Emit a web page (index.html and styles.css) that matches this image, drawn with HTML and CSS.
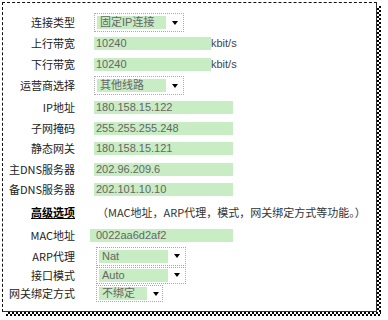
FILE: index.html
```html
<!DOCTYPE html>
<html>
<head>
<meta charset="utf-8">
<link rel="stylesheet" href="styles.css">
</head>
<body>
<div class="shell">
  <div class="box">
    <div class="form">
      <div class="lbl">连接类型</div>
      <div class="cell"><div class="sel"><span class="sv">固定IP连接</span><span class="arr"></span></div></div>

      <div class="lbl">上行带宽</div>
      <div class="cell"><span class="inp short">10240</span><span class="unit">kbit/s</span></div>

      <div class="lbl">下行带宽</div>
      <div class="cell"><span class="inp short">10240</span><span class="unit">kbit/s</span></div>

      <div class="lbl">运营商选择</div>
      <div class="cell"><div class="sel"><span class="sv">其他线路</span><span class="arr"></span></div></div>

      <div class="lbl">IP地址</div>
      <div class="cell"><span class="inp">180.158.15.122</span></div>

      <div class="lbl">子网掩码</div>
      <div class="cell"><span class="inp">255.255.255.248</span></div>

      <div class="lbl">静态网关</div>
      <div class="cell"><span class="inp">180.158.15.121</span></div>

      <div class="lbl">主DNS服务器</div>
      <div class="cell"><span class="inp">202.96.209.6</span></div>

      <div class="lbl">备DNS服务器</div>
      <div class="cell"><span class="inp">202.101.10.10</span></div>

      <div class="lbl adv">高级选项</div>
      <div class="cell desc">（MAC地址，ARP代理，模式，网关绑定方式等功能。）</div>

      <div class="lbl">MAC地址</div>
      <div class="cell"><span class="inp mac">0022aa6d2af2</span></div>

      <div class="lbl">ARP代理</div>
      <div class="cell"><div class="sel low"><span class="sv">Nat</span><span class="arr"></span></div></div>

      <div class="lbl">接口模式</div>
      <div class="cell"><div class="sel low thin"><span class="sv">Auto</span><span class="arr"></span></div></div>

      <div class="lbl">网关绑定方式</div>
      <div class="cell"><div class="sel low thin narrow"><span class="sv">不绑定</span><span class="arr"></span></div></div>
    </div>
  </div>
  <div class="shadow-r"></div>
  <div class="shadow-b"></div>
</div>
</body>
</html>
```

FILE: styles.css
```css
html, body {
  margin: 0;
  padding: 0;
  background: #fff;
}

body {
  font-family: "Noto Sans CJK SC", "Liberation Sans", sans-serif;
  font-size: 11px;
  color: #222;
}

.shell {
  display: grid;
  grid-template-columns: 375px 4px;
  grid-template-rows: 310px 4px;
  margin: 2px 0 0 2px;
  width: 379px;
}

.box {
  grid-column: 1;
  grid-row: 1;
  box-sizing: border-box;
  border-top: 1px dashed #111;
  border-left: 1px dashed #111;
  border-right: 1px solid #333;
  border-bottom: 1px solid #333;
}

.shadow-r, .shadow-b {
  background: conic-gradient(#000 25%, #fff 0 50%, #000 0 75%, #fff 0) 0 0 / 4px 4px;
}

.shadow-r {
  grid-column: 2;
  grid-row: 1;
  margin-top: 4px;
}

.shadow-b {
  grid-column: 1 / 3;
  grid-row: 2;
  margin-left: 4px;
}

.form {
  display: grid;
  grid-template-columns: 72px 1fr;
  grid-template-rows: 21px 21px 20px 23px 21px 20px 21px 20px 21px 24px 22px 20px 18px 19px;
  column-gap: 19px;
  padding-top: 9px;
}

.lbl {
  display: flex;
  align-items: center;
  justify-content: flex-end;
  line-height: 1;
  white-space: nowrap;
  color: #222;
}

.lbl.adv {
  font-weight: bold;
  color: #000;
  text-decoration: underline;
}

.cell {
  display: flex;
  align-items: center;
  line-height: 1;
}

.inp {
  box-sizing: border-box;
  display: flex;
  align-items: center;
  width: 139px;
  height: 13px;
  padding-left: 2px;
  background: #c8ecc3;
  font-family: "Liberation Sans", sans-serif;
  font-size: 11px;
  color: #666;
}

.inp.short {
  width: 117px;
}

.inp.mac {
  margin-left: -4px;
  width: 143px;
  padding-left: 6px;
}

.unit {
  font-family: "Liberation Sans", sans-serif;
  font-size: 11px;
  color: #444;
}

.sel {
  box-sizing: border-box;
  display: flex;
  align-items: center;
  width: 90px;
  height: 19px;
  border: 1px dotted #aaa;
  padding-left: 2px;
}

.sel.low {
  margin-left: 2px;
}

.sel.thin {
  height: 17px;
}

.sel.narrow {
  width: 67px;
}

.sv {
  box-sizing: border-box;
  display: flex;
  align-items: center;
  width: 69px;
  height: 13px;
  padding-left: 3px;
  background: #c8ecc3;
  font-family: "Liberation Sans", "Noto Sans CJK SC", sans-serif;
  color: #666;
}

.sel.narrow .sv {
  width: 48px;
}

.arr {
  margin-left: 6px;
  width: 0;
  height: 0;
  border-left: 3px solid transparent;
  border-right: 3px solid transparent;
  border-top: 4px solid #000;
}

.desc {
  color: #333;
  font-size: 11px;
  margin-left: 3px;
  white-space: nowrap;
}
```
